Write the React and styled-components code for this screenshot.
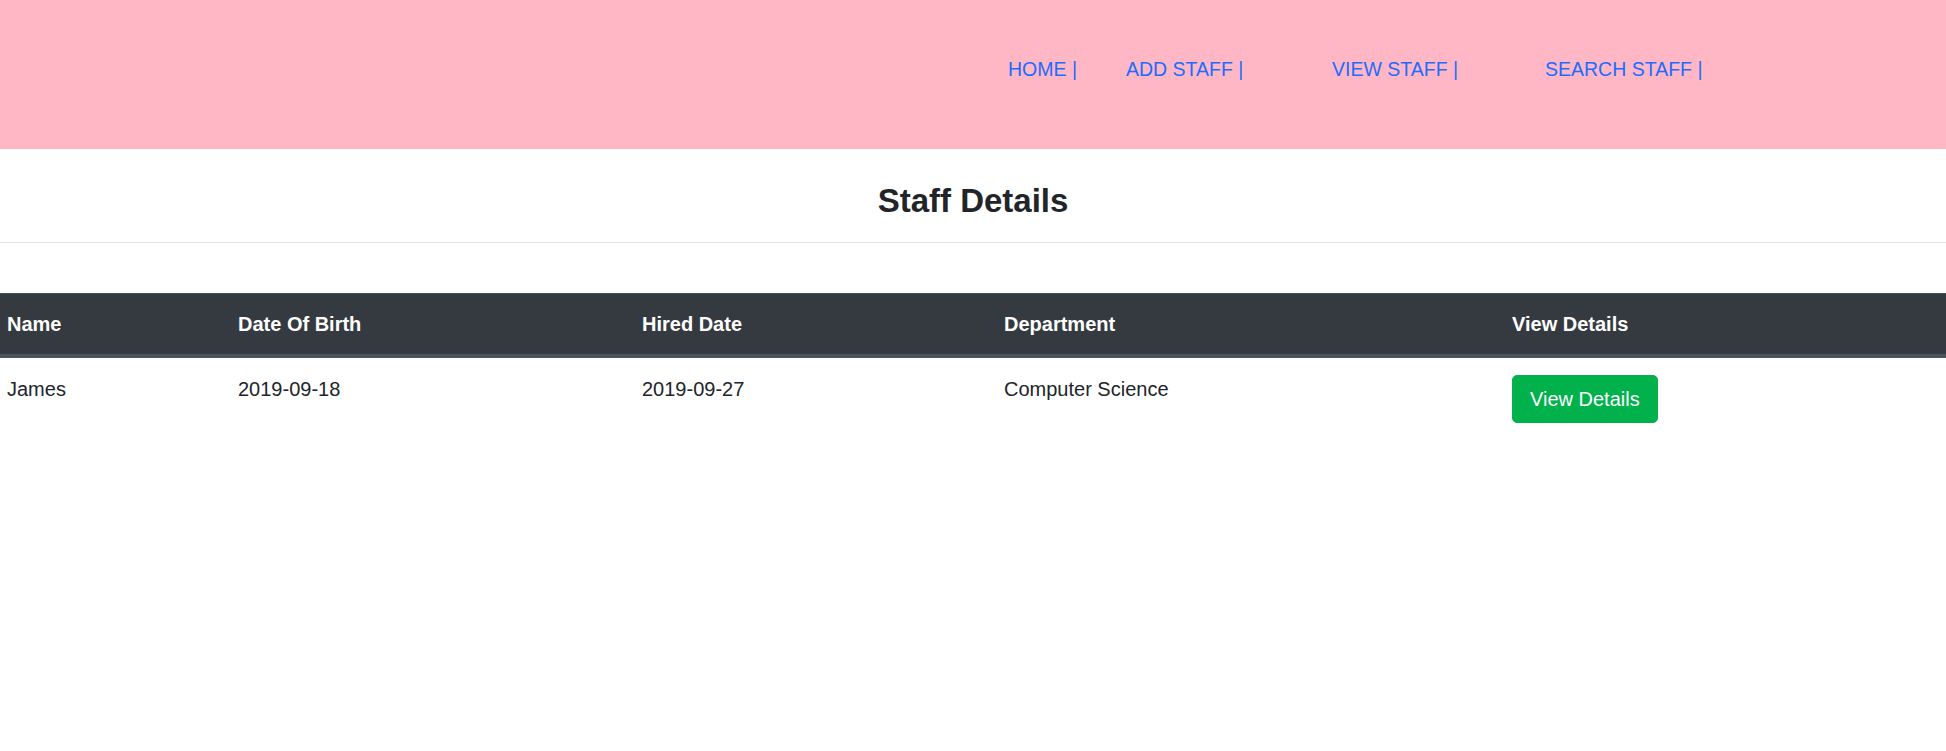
import React from "react";
import styled, { createGlobalStyle } from "styled-components";

const GlobalStyle = createGlobalStyle`
  body {
    margin: 0;
    background: #ffffff;
    font-family: "Liberation Sans", Arial, Helvetica, sans-serif;
    color: #212529;
  }
`;

const staff = [
  {
    id: 1,
    name: "James",
    dob: "2019-09-18",
    hired: "2019-09-27",
    department: "Computer Science",
  },
];

const columns = [
  { label: "Name", width: 231 },
  { label: "Date Of Birth", width: 404 },
  { label: "Hired Date", width: 362 },
  { label: "Department", width: 508 },
  { label: "View Details", width: 441 },
];

const navItems = [
  { label: "HOME |", width: 118 },
  { label: "ADD STAFF |", width: 206 },
  { label: "VIEW STAFF |", width: 213 },
  { label: "SEARCH STAFF |", width: 160 },
];

const Header = styled.header`
  height: 149px;
  background-color: #ffb7c5;
  box-sizing: border-box;
  padding: 54px 0 0 1008px;
`;

const NavList = styled.nav`
  display: flex;
  align-items: center;
`;

const NavLink = styled.a`
  flex: 0 0 ${(props) => props.$width}px;
  font-size: 19.5px;
  line-height: 30px;
  color: #1c6cff;
  text-decoration: none;
  white-space: nowrap;
  cursor: pointer;
`;

const TitleSection = styled.section`
  padding-top: 31px;
  border-bottom: 1px solid #e3e3e3;
  padding-bottom: 20px;
`;

const Title = styled.h3`
  margin: 0;
  text-align: center;
  font-size: 33px;
  line-height: 42px;
  font-weight: 700;
  color: #212529;
`;

const Table = styled.table`
  margin-top: 50px;
  width: 100%;
  border-collapse: collapse;
  table-layout: fixed;
`;

const Col = styled.col`
  width: ${(props) => props.$width}px;
`;

const HeadCell = styled.th`
  background-color: #343a40;
  color: #ffffff;
  font-size: 20px;
  line-height: 30px;
  font-weight: 700;
  text-align: left;
  padding: 15px 7px;
  border-top: 1px solid #454d55;
  border-bottom: 4px solid #4b545c;
`;

const Cell = styled.td`
  font-size: 20px;
  line-height: 30px;
  color: #212529;
  padding: 16px 7px 15px;
  vertical-align: top;
  border-top: 1px solid #dee2e6;
`;

const DetailsButton = styled.button`
  margin-top: 1px;
  font-family: inherit;
  font-size: 20px;
  line-height: 30px;
  color: #ffffff;
  background-color: #00b14c;
  border: 1px solid #00b14c;
  border-radius: 5px;
  padding: 8px 17px;
  cursor: pointer;
`;

export default function App() {
  return (
    <>
      <GlobalStyle />
      <Header>
        <NavList>
          {navItems.map((item) => (
            <NavLink key={item.label} $width={item.width}>
              {item.label}
            </NavLink>
          ))}
        </NavList>
      </Header>

      <TitleSection>
        <Title>Staff Details</Title>
      </TitleSection>

      <Table>
        <colgroup>
          {columns.map((c) => (
            <Col key={c.label} $width={c.width} />
          ))}
        </colgroup>
        <thead>
          <tr>
            {columns.map((c) => (
              <HeadCell key={c.label}>{c.label}</HeadCell>
            ))}
          </tr>
        </thead>
        <tbody>
          {staff.map((s) => (
            <tr key={s.id}>
              <Cell>{s.name}</Cell>
              <Cell>{s.dob}</Cell>
              <Cell>{s.hired}</Cell>
              <Cell>{s.department}</Cell>
              <Cell>
                <DetailsButton>View Details</DetailsButton>
              </Cell>
            </tr>
          ))}
        </tbody>
      </Table>
    </>
  );
}
